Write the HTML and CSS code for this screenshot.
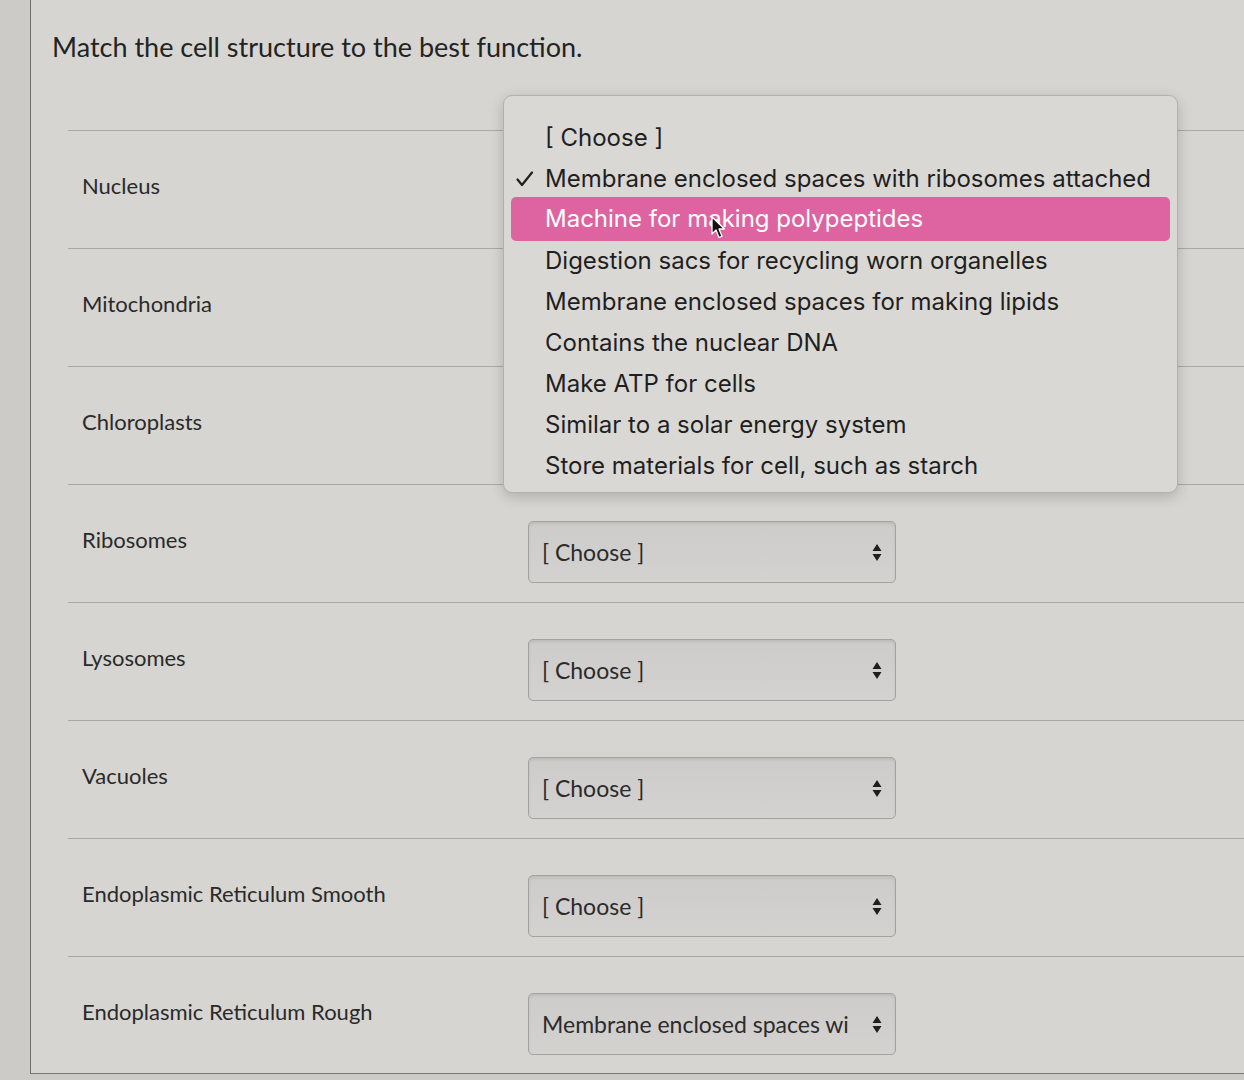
FILE: index.html
```html
<!DOCTYPE html>
<html lang="en">
<head>
    <meta charset="UTF-8">
    <meta name="viewport" content="width=device-width, initial-scale=1.0">
    <title>Match the cell structure</title>
    <link rel="stylesheet" href="styles.css">
</head>
<body>
    <div class="question">
        <p class="question-text">Match the cell structure to the best function.</p>

        <div class="answers">
            <div class="match-row">
                <div class="match-label">Nucleus</div>
                <div class="match-cell">
                    <div class="select covered"><span class="select-value">Membrane enclosed spaces wi</span></div>

                    <!-- menu abierto del primer select -->
                    <ul class="select-menu">
                        <li class="menu-item">[ Choose ]</li>
                        <li class="menu-item checked">
                            <svg class="check" width="18" height="16" viewBox="0 0 18 16"><path d="M1.5 8.5 L6 14 L16 1.5" fill="none" stroke="#1f1f1f" stroke-width="2.2" stroke-linecap="round" stroke-linejoin="round"/></svg>
                            Membrane enclosed spaces with ribosomes attached
                        </li>
                        <li class="menu-item active">Machine for making polypeptides
                            <svg class="cursor" width="16" height="24" viewBox="0 0 16 24"><path d="M1 1 L1 18 L5 14 L8 21.5 L11 20.3 L8 13 L13.5 13 Z" fill="#111" stroke="#fff" stroke-width="1.3" stroke-linejoin="round"/></svg>
                        </li>
                        <li class="menu-item">Digestion sacs for recycling worn organelles</li>
                        <li class="menu-item">Membrane enclosed spaces for making lipids</li>
                        <li class="menu-item">Contains the nuclear DNA</li>
                        <li class="menu-item">Make ATP for cells</li>
                        <li class="menu-item">Similar to a solar energy system</li>
                        <li class="menu-item">Store materials for cell, such as starch</li>
                    </ul>
                </div>
            </div>
            <div class="match-row">
                <div class="match-label">Mitochondria</div>
                <div class="match-cell">
                    <div class="select covered"><span class="select-value">[ Choose ]</span></div>
                </div>
            </div>
            <div class="match-row">
                <div class="match-label">Chloroplasts</div>
                <div class="match-cell">
                    <div class="select covered"><span class="select-value">[ Choose ]</span></div>
                </div>
            </div>
            <div class="match-row">
                <div class="match-label">Ribosomes</div>
                <div class="match-cell">
                    <div class="select">
                        <span class="select-value">[ Choose ]</span>
                        <svg class="arrows" width="10" height="19" viewBox="0 0 10 19"><path d="M0.5 8 L5 1 L9.5 8 Z M0.5 11 L5 18 L9.5 11 Z" fill="#1e1e1e"/></svg>
                    </div>
                </div>
            </div>
            <div class="match-row">
                <div class="match-label">Lysosomes</div>
                <div class="match-cell">
                    <div class="select">
                        <span class="select-value">[ Choose ]</span>
                        <svg class="arrows" width="10" height="19" viewBox="0 0 10 19"><path d="M0.5 8 L5 1 L9.5 8 Z M0.5 11 L5 18 L9.5 11 Z" fill="#1e1e1e"/></svg>
                    </div>
                </div>
            </div>
            <div class="match-row">
                <div class="match-label">Vacuoles</div>
                <div class="match-cell">
                    <div class="select">
                        <span class="select-value">[ Choose ]</span>
                        <svg class="arrows" width="10" height="19" viewBox="0 0 10 19"><path d="M0.5 8 L5 1 L9.5 8 Z M0.5 11 L5 18 L9.5 11 Z" fill="#1e1e1e"/></svg>
                    </div>
                </div>
            </div>
            <div class="match-row">
                <div class="match-label">Endoplasmic Reticulum Smooth</div>
                <div class="match-cell">
                    <div class="select">
                        <span class="select-value">[ Choose ]</span>
                        <svg class="arrows" width="10" height="19" viewBox="0 0 10 19"><path d="M0.5 8 L5 1 L9.5 8 Z M0.5 11 L5 18 L9.5 11 Z" fill="#1e1e1e"/></svg>
                    </div>
                </div>
            </div>
            <div class="match-row">
                <div class="match-label">Endoplasmic Reticulum Rough</div>
                <div class="match-cell">
                    <div class="select">
                        <span class="select-value">Membrane enclosed spaces wi</span>
                        <svg class="arrows" width="10" height="19" viewBox="0 0 10 19"><path d="M0.5 8 L5 1 L9.5 8 Z M0.5 11 L5 18 L9.5 11 Z" fill="#1e1e1e"/></svg>
                    </div>
                </div>
            </div>
        </div>
    </div>
</body>
</html>
```

FILE: styles.css
```css
html, body {
    margin: 0;
    padding: 0;
    overflow: hidden;
}
body {
    font-family: Lato, 'Open Sans', sans-serif;
    background: #cdcbc8;
    color: #262626;
    width: 1244px;
    height: 1080px;
}
.question {
    margin-left: 30px;
    width: 1214px;
    height: 1074px;
    box-sizing: border-box;
    padding-top: 30px;
    background: #d7d5d2;
    border-left: 1px solid #6e6c6a;
    border-bottom: 1px solid #7a7876;
}
.question-text {
    margin: 0 0 0 21px;
    font-size: 27px;
    line-height: 34px;
    color: #232323;
}
.answers {
    margin-top: 66px;
    margin-left: 37px;
}
.match-row {
    display: grid;
    grid-template-columns: 460px 368px;
    align-items: start;
    height: 118px;
    box-sizing: border-box;
    border-top: 1px solid #aaa8a5;
}
.match-label {
    padding-left: 14px;
    margin-top: 42px;
    font-size: 22px;
    line-height: 26px;
    color: #2a2a2a;
}
.match-cell {
    position: relative;
    margin-top: 36px;
}
.select {
    display: flex;
    align-items: center;
    justify-content: space-between;
    height: 62px;
    box-sizing: border-box;
    padding: 0 13px 0 13px;
    border: 1px solid #a4a2a0;
    border-radius: 5px;
    background: linear-gradient(to bottom, #cecccb, #d4d2cf);
    box-shadow: inset 0 2px 3px rgba(0, 0, 0, 0.08);
    font-size: 23px;
    color: #2b2b2b;
}
.select.covered {
    visibility: hidden;
}
.select-value {
    white-space: nowrap;
}

/* menu desplegado (estilo nativo) */
.select-menu {
    position: absolute;
    left: -25px;
    top: -72px;
    width: 675px;
    margin: 0;
    padding: 21px 7px 6px;
    box-sizing: border-box;
    list-style: none;
    background: #dad8d5;
    border: 1px solid #b3b1ae;
    border-radius: 9px;
    box-shadow: 0 4px 14px rgba(0, 0, 0, 0.18);
    font-family: Inter, 'Liberation Sans', sans-serif;
    font-size: 24px;
    color: #1f1f1f;
    visibility: visible;
    z-index: 2;
}
.menu-item {
    position: relative;
    height: 41px;
    line-height: 41px;
    padding-left: 34px;
    border-radius: 5px;
    white-space: nowrap;
}
.menu-item.active {
    height: 44px;
    line-height: 44px;
    margin: -2px 0 -1px;
    background: #dd64a0;
    color: #fff;
}
.check {
    position: absolute;
    left: 5px;
    top: 13px;
}
.cursor {
    position: absolute;
    left: 200px;
    top: 19px;
}
```
